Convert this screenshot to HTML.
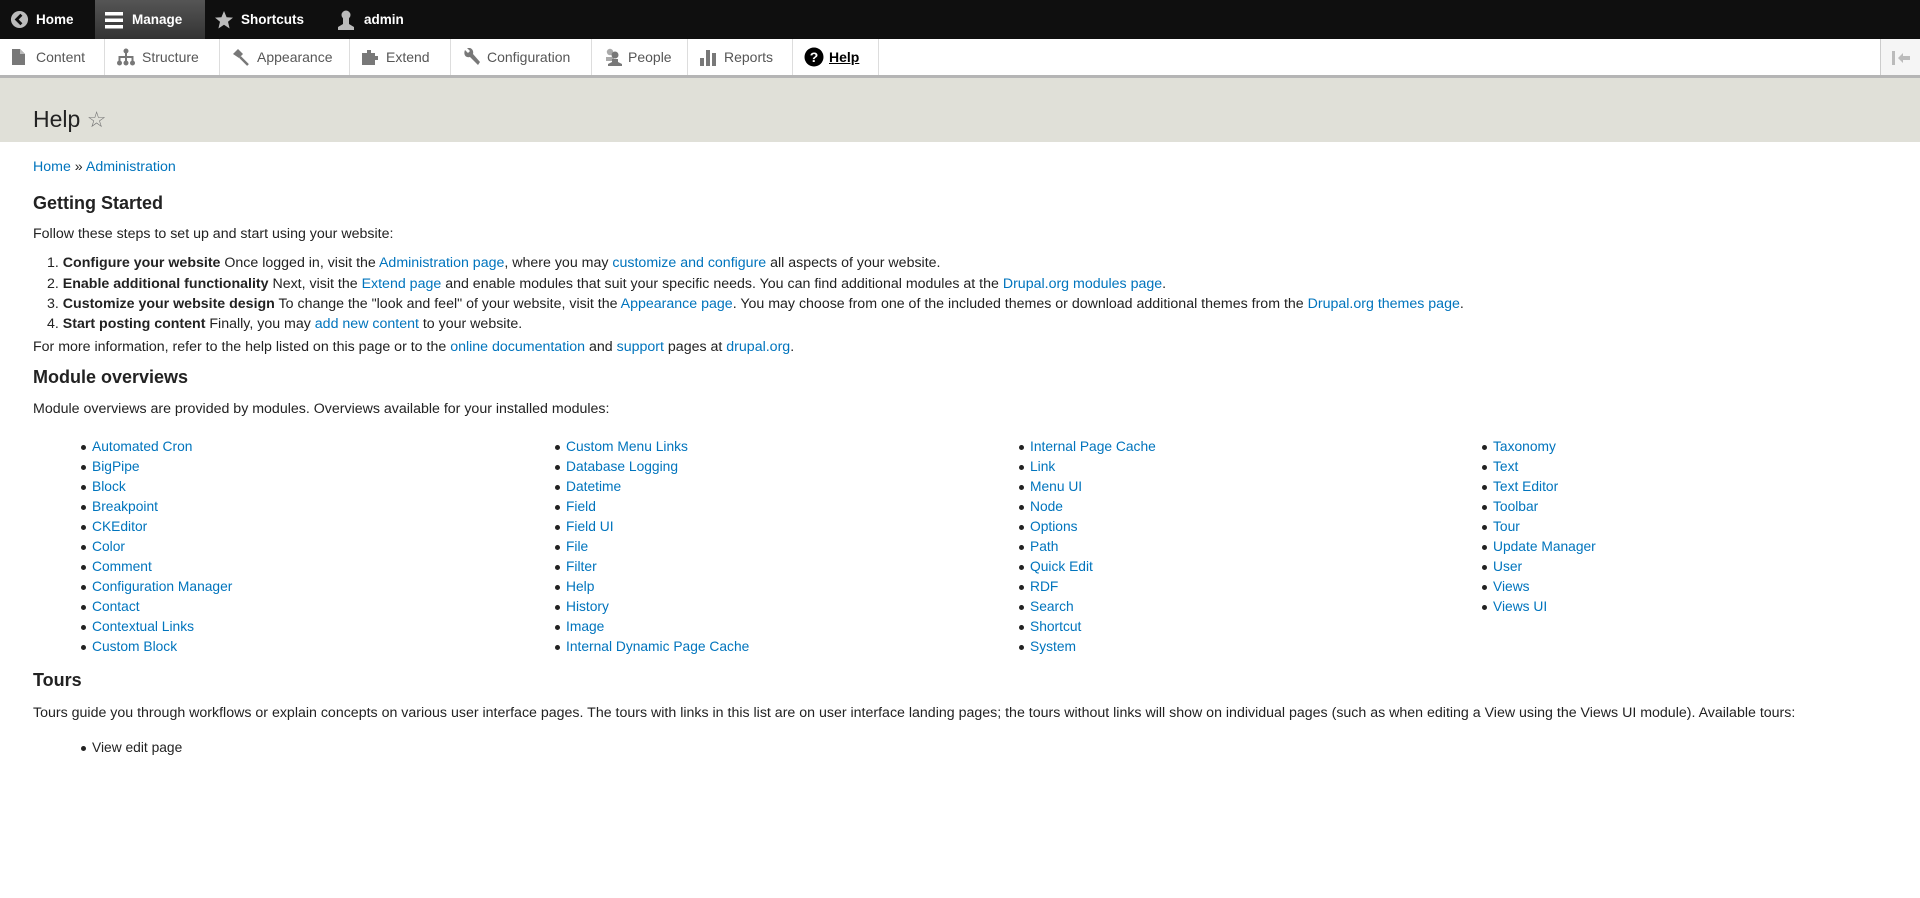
<!DOCTYPE html>
<html><head><meta charset="utf-8">
<style>
*{margin:0;padding:0;box-sizing:border-box}
body{width:1920px;height:898px;overflow:hidden;background:#fff;font-family:"Liberation Sans",sans-serif;font-size:14.2px;color:#222;position:relative}
a{color:#0074bd;text-decoration:none}
.bar{position:absolute;left:0;top:0;width:1920px;height:39px;background:#0f0f0f}
.bar .it{position:absolute;top:0;height:39px;line-height:39px;color:#fff;font-weight:bold;font-size:13.5px}
.bar svg{position:absolute;top:10px}
.tray{position:absolute;left:0;top:39px;width:1920px;height:39px;background:#fff;border-bottom:3px solid #b5b5b5;box-shadow:0 1px 2px rgba(0,0,0,.2)}
.ti{position:absolute;top:0;height:36px;line-height:36px;border-right:1px solid #ddd;color:#565656;font-size:14px}
.ti svg{position:absolute;left:11px;top:9px}
.ti span{position:absolute;left:36px;white-space:nowrap}
.head{position:absolute;left:0;top:78px;width:1920px;height:64px;background:#e0e0d8}
.abs{position:absolute;white-space:nowrap;line-height:20px}
h1{position:absolute;left:33px;top:104px;font-size:23px;font-weight:normal;color:#232323;line-height:30px}
h2{position:absolute;left:33px;font-size:18px;font-weight:bold;color:#222;line-height:24px}
.li{position:absolute;white-space:nowrap;line-height:20px;font-size:13.8px}
.li:before{content:"";position:absolute;left:-11px;top:8px;width:5px;height:5px;border-radius:50%;background:#222}
</style></head><body>
<div class="bar">
 <div class="it" style="left:0;width:95px"><svg style="left:10px" width="19" height="19" viewBox="0 0 20 20"><circle cx="10" cy="10" r="9" fill="#bbb"/><path d="M12 5 L7 10 L12 15" stroke="#0f0f0f" stroke-width="3" fill="none"/></svg><span style="position:absolute;left:36px">Home</span></div>
 <div class="it" style="left:95px;width:110px;background:linear-gradient(#555,#333)"><svg style="left:9px" width="20" height="20" viewBox="0 0 20 20"><rect x="1" y="2" width="18" height="3.5" fill="#fff"/><rect x="1" y="8.5" width="18" height="3.5" fill="#fff"/><rect x="1" y="15" width="18" height="3.5" fill="#fff"/></svg><span style="position:absolute;left:37px">Manage</span></div>
 <div class="it" style="left:205px;width:120px"><svg style="left:9px" width="20" height="20" viewBox="0 0 20 20"><path d="M10 1 L12.6 7.2 L19 7.6 L14 11.8 L15.6 18.5 L10 14.8 L4.4 18.5 L6 11.8 L1 7.6 L7.4 7.2 Z" fill="#bbb"/></svg><span style="position:absolute;left:36px">Shortcuts</span></div>
 <div class="it" style="left:325px;width:90px"><svg style="left:12px" width="18" height="20" viewBox="0 0 18 20"><circle cx="9" cy="5" r="4.5" fill="#bbb"/><path d="M6 8 L12 8 L12 14 L17 17 L17 20 L1 20 L1 17 L6 14 Z" fill="#bbb"/></svg><span style="position:absolute;left:39px">admin</span></div>
</div>
<div class="tray">
 <div class="ti" style="left:0;width:105px"><svg width="16" height="18" viewBox="0 0 16 18"><path d="M1 1 H9 L14 6 V17 H1 Z" fill="#787878"/><path d="M9 1 V6 H14" fill="#bbb"/></svg><span>Content</span></div>
 <div class="ti" style="left:105px;width:115px"><svg width="20" height="18" viewBox="0 0 20 18"><circle cx="10" cy="3" r="2.5" fill="#787878"/><rect x="9" y="4" width="2" height="6" fill="#787878"/><rect x="3" y="8" width="14" height="2" fill="#787878"/><rect x="2.5" y="8" width="2" height="6" fill="#787878"/><rect x="15.5" y="8" width="2" height="6" fill="#787878"/><rect x="9" y="8" width="2" height="6" fill="#787878"/><circle cx="3.5" cy="15" r="2.5" fill="#787878"/><circle cx="10" cy="15" r="2.5" fill="#787878"/><circle cx="16.5" cy="15" r="2.5" fill="#787878"/></svg><span style="left:37px">Structure</span></div>
 <div class="ti" style="left:220px;width:130px"><svg width="20" height="18" viewBox="0 0 20 18"><path d="M2 6 L7 1 L12 6 L8 10 Z" fill="#787878"/><path d="M9 9 L17 17" stroke="#787878" stroke-width="2.5"/></svg><span style="left:37px">Appearance</span></div>
 <div class="ti" style="left:350px;width:101px"><svg width="20" height="18" viewBox="0 0 20 18"><path d="M1 5 H6 V2 H10 V5 H14 V8 H17 V12 H14 V17 H1 Z" fill="#787878"/></svg><span>Extend</span></div>
 <div class="ti" style="left:451px;width:141px"><svg width="20" height="18" viewBox="0 0 20 18"><path d="M3 2 L6 5 L8 3 L5 0 C9 -1 12 2 11 6 L18 14 L16 17 L8 9 C4 10 1 7 3 2 Z" fill="#787878"/></svg><span>Configuration</span></div>
 <div class="ti" style="left:592px;width:96px"><svg width="20" height="18" viewBox="0 0 20 18"><circle cx="7" cy="4" r="3.2" fill="#aaa"/><path d="M3 9 H11 V13 H3 Z" fill="#aaa"/><circle cx="12" cy="7" r="3.5" fill="#787878"/><path d="M9 11 H15 V14 L19 16 V18 H5 V16 L9 14 Z" fill="#787878"/></svg><span>People</span></div>
 <div class="ti" style="left:688px;width:105px"><svg width="20" height="18" viewBox="0 0 20 18"><rect x="1" y="10" width="4" height="8" fill="#787878"/><rect x="7" y="2" width="4" height="16" fill="#787878"/><rect x="13" y="5" width="4" height="13" fill="#787878"/></svg><span>Reports</span></div>
 <div class="ti" style="left:793px;width:86px;color:#000;font-weight:bold"><svg width="20" height="20" viewBox="0 0 20 20" style="top:8px"><circle cx="10" cy="10" r="9.5" fill="#000"/><text x="10" y="15" text-anchor="middle" fill="#fff" font-family="Liberation Sans" font-weight="bold" font-size="14">?</text></svg><span style="text-decoration:underline">Help</span></div>
 <div style="position:absolute;left:1880px;top:0;width:40px;height:36px;border-left:1px solid #ccc;background:#f5f5f5"><div style="position:absolute;left:11px;top:12px;width:3px;height:14px;background:#bbb"></div><svg style="position:absolute;left:17px;top:13px" width="12" height="12" viewBox="0 0 12 12"><path d="M0 6 L5 1 V4 H12 V8 H5 V11 Z" fill="#bbb"/></svg></div>
</div>
<div class="head"></div>
<h1>Help <span style="color:#777;font-size:22px">☆</span></h1>
<div class="abs" style="left:33px;top:157px"><a>Home</a> » <a>Administration</a></div>
<h2 style="top:191px">Getting Started</h2>
<div class="abs" style="left:33px;top:224px">Follow these steps to set up and start using your website:</div>
<div class="abs" style="left:47px;top:253px">1. <b>Configure your website</b> Once logged in, visit the <a>Administration page</a>, where you may <a>customize and configure</a> all aspects of your website.</div>
<div class="abs" style="left:47px;top:274px">2. <b>Enable additional functionality</b> Next, visit the <a>Extend page</a> and enable modules that suit your specific needs. You can find additional modules at the <a>Drupal.org modules page</a>.</div>
<div class="abs" style="left:47px;top:294px">3. <b>Customize your website design</b> To change the "look and feel" of your website, visit the <a>Appearance page</a>. You may choose from one of the included themes or download additional themes from the <a>Drupal.org themes page</a>.</div>
<div class="abs" style="left:47px;top:314px">4. <b>Start posting content</b> Finally, you may <a>add new content</a> to your website.</div>
<div class="abs" style="left:33px;top:337px">For more information, refer to the help listed on this page or to the <a>online documentation</a> and <a>support</a> pages at <a>drupal.org</a>.</div>
<h2 style="top:365px">Module overviews</h2>
<div class="abs" style="left:33px;top:399px">Module overviews are provided by modules. Overviews available for your installed modules:</div>
<h2 style="top:668px">Tours</h2>
<div class="abs" style="left:33px;top:703px">Tours guide you through workflows or explain concepts on various user interface pages. The tours with links in this list are on user interface landing pages; the tours without links will show on individual pages (such as when editing a View using the Views UI module). Available tours:</div>
<div class="li" style="left:92px;top:738px">View edit page</div>

<div class="li" style="left:92px;top:437px"><a>Automated Cron</a></div>
<div class="li" style="left:92px;top:457px"><a>BigPipe</a></div>
<div class="li" style="left:92px;top:477px"><a>Block</a></div>
<div class="li" style="left:92px;top:497px"><a>Breakpoint</a></div>
<div class="li" style="left:92px;top:517px"><a>CKEditor</a></div>
<div class="li" style="left:92px;top:537px"><a>Color</a></div>
<div class="li" style="left:92px;top:557px"><a>Comment</a></div>
<div class="li" style="left:92px;top:577px"><a>Configuration Manager</a></div>
<div class="li" style="left:92px;top:597px"><a>Contact</a></div>
<div class="li" style="left:92px;top:617px"><a>Contextual Links</a></div>
<div class="li" style="left:92px;top:637px"><a>Custom Block</a></div>

<div class="li" style="left:566px;top:437px"><a>Custom Menu Links</a></div>
<div class="li" style="left:566px;top:457px"><a>Database Logging</a></div>
<div class="li" style="left:566px;top:477px"><a>Datetime</a></div>
<div class="li" style="left:566px;top:497px"><a>Field</a></div>
<div class="li" style="left:566px;top:517px"><a>Field UI</a></div>
<div class="li" style="left:566px;top:537px"><a>File</a></div>
<div class="li" style="left:566px;top:557px"><a>Filter</a></div>
<div class="li" style="left:566px;top:577px"><a>Help</a></div>
<div class="li" style="left:566px;top:597px"><a>History</a></div>
<div class="li" style="left:566px;top:617px"><a>Image</a></div>
<div class="li" style="left:566px;top:637px"><a>Internal Dynamic Page Cache</a></div>

<div class="li" style="left:1030px;top:437px"><a>Internal Page Cache</a></div>
<div class="li" style="left:1030px;top:457px"><a>Link</a></div>
<div class="li" style="left:1030px;top:477px"><a>Menu UI</a></div>
<div class="li" style="left:1030px;top:497px"><a>Node</a></div>
<div class="li" style="left:1030px;top:517px"><a>Options</a></div>
<div class="li" style="left:1030px;top:537px"><a>Path</a></div>
<div class="li" style="left:1030px;top:557px"><a>Quick Edit</a></div>
<div class="li" style="left:1030px;top:577px"><a>RDF</a></div>
<div class="li" style="left:1030px;top:597px"><a>Search</a></div>
<div class="li" style="left:1030px;top:617px"><a>Shortcut</a></div>
<div class="li" style="left:1030px;top:637px"><a>System</a></div>

<div class="li" style="left:1493px;top:437px"><a>Taxonomy</a></div>
<div class="li" style="left:1493px;top:457px"><a>Text</a></div>
<div class="li" style="left:1493px;top:477px"><a>Text Editor</a></div>
<div class="li" style="left:1493px;top:497px"><a>Toolbar</a></div>
<div class="li" style="left:1493px;top:517px"><a>Tour</a></div>
<div class="li" style="left:1493px;top:537px"><a>Update Manager</a></div>
<div class="li" style="left:1493px;top:557px"><a>User</a></div>
<div class="li" style="left:1493px;top:577px"><a>Views</a></div>
<div class="li" style="left:1493px;top:597px"><a>Views UI</a></div>
</body></html>
